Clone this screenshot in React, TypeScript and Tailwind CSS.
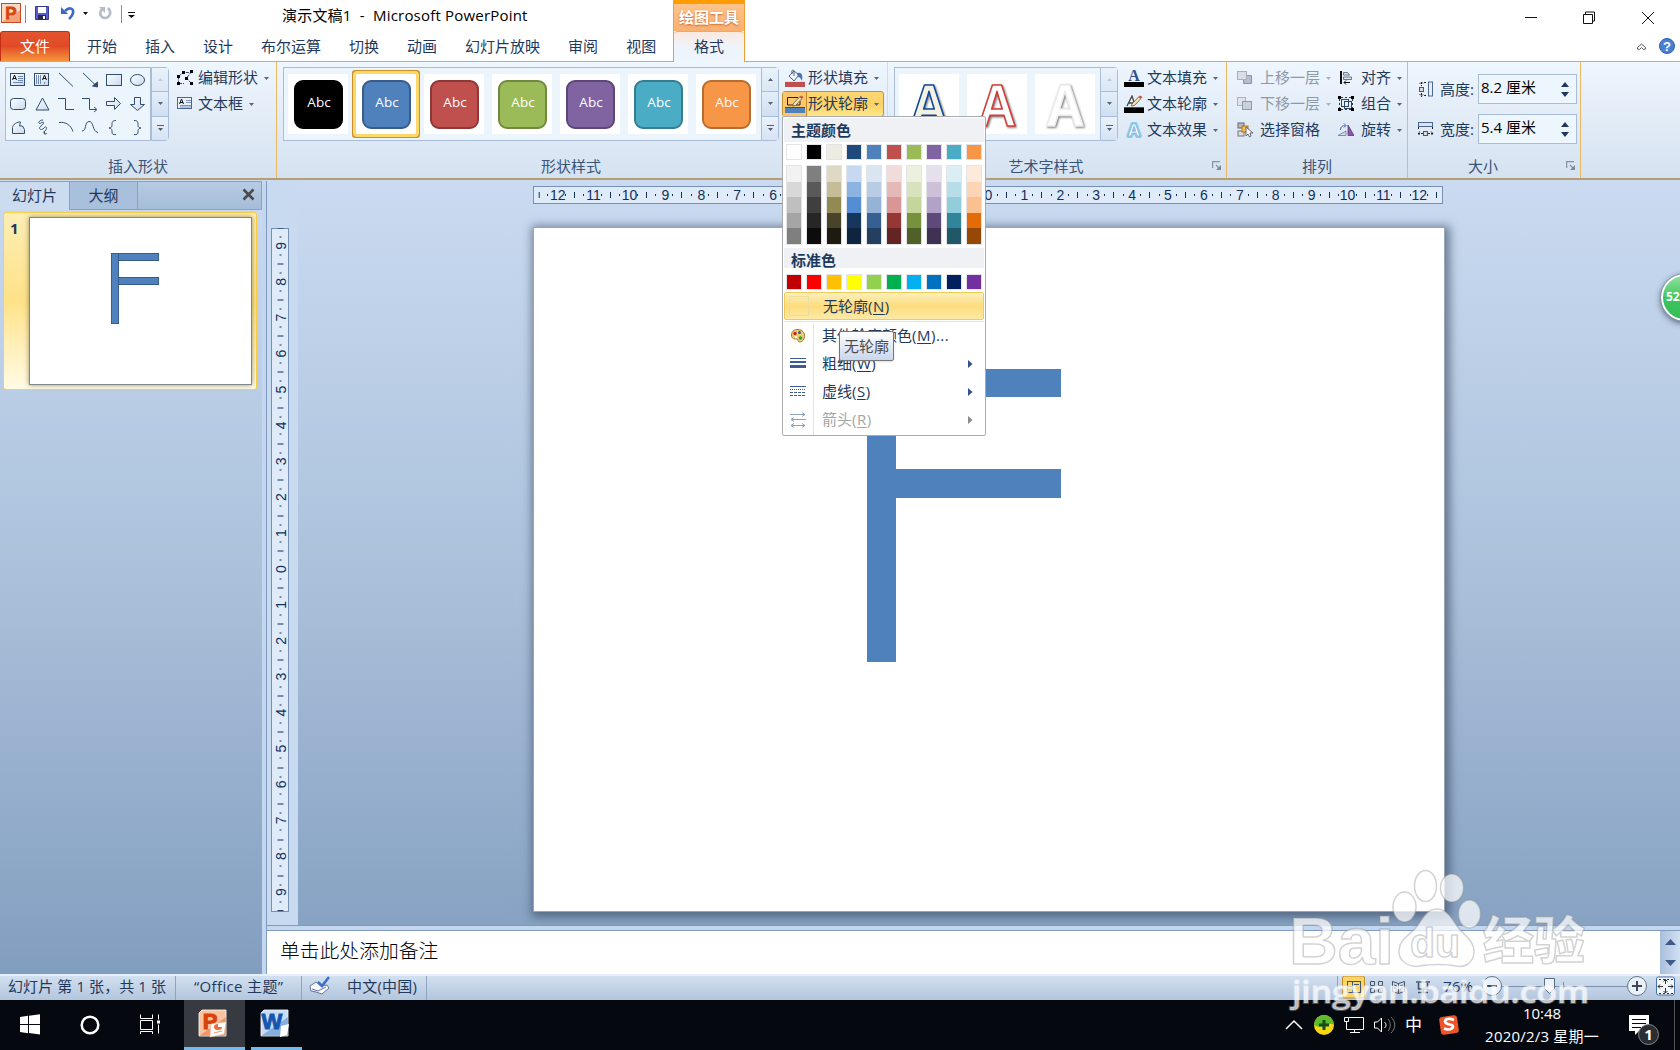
import React from "react";

const NAVY = "#1e395b";

const tabs = ["开始", "插入", "设计", "布尔运算", "切换", "动画", "幻灯片放映", "审阅", "视图"];

const shapeStyles = [
  { fill: "#000000", line: "#000000" },
  { fill: "#4f81bd", line: "#385d8a" },
  { fill: "#c0504d", line: "#8c3836" },
  { fill: "#9bbb59", line: "#71893f" },
  { fill: "#8064a2", line: "#5c4776" },
  { fill: "#4bacc6", line: "#357d91" },
  { fill: "#f79646", line: "#b66d31" },
];

const themeColors = [
  ["#ffffff", "#f2f2f2", "#d8d8d8", "#bfbfbf", "#a5a5a5", "#7f7f7f"],
  ["#000000", "#7f7f7f", "#595959", "#3f3f3f", "#262626", "#0c0c0c"],
  ["#eeece1", "#ddd9c3", "#c4bd97", "#938953", "#494429", "#1d1b10"],
  ["#1f497d", "#c6d9f0", "#8db3e2", "#548dd4", "#17365d", "#0f243e"],
  ["#4f81bd", "#dbe5f1", "#b8cce4", "#95b3d7", "#366092", "#244061"],
  ["#c0504d", "#f2dcdb", "#e5b9b7", "#d99694", "#953734", "#632423"],
  ["#9bbb59", "#ebf1dd", "#d7e3bc", "#c3d69b", "#76923c", "#4f6128"],
  ["#8064a2", "#e5e0ec", "#ccc1d9", "#b2a2c7", "#5f497a", "#3f3151"],
  ["#4bacc6", "#dbeef3", "#b7dde8", "#92cddc", "#31859b", "#205867"],
  ["#f79646", "#fdeada", "#fbd5b5", "#fac08f", "#e36c09", "#974806"],
];

const standardColors = ["#c00000", "#ff0000", "#ffc000", "#ffff00", "#92d050", "#00b050", "#00b0f0", "#0070c0", "#002060", "#7030a0"];

const Caret = ({ color = "#5c6672" }: { color?: string }) => (
  <svg width="5" height="3" viewBox="0 0 5 3" className="shrink-0">
    <path d="M0 0h5L2.5 3z" fill={color} />
  </svg>
);

const ShapesGallery = () => (
  <svg width="146" height="74" viewBox="5 67 146 74" fill="none" stroke="#2f4d75" strokeWidth="1">
    <defs>
      <linearGradient id="soft" x1="0" y1="0" x2="1" y2="1">
        <stop offset="0" stopColor="#fff" />
        <stop offset="1" stopColor="#c9d9ee" />
      </linearGradient>
    </defs>
    <rect x="10.5" y="73.5" width="14" height="12" fill="url(#soft)" />
    <path d="M18 76.500h5M18 78.500h5M18 80.500h5M13 82.500h10" stroke="#6f8bb5" />
    <path d="M12.500 80l2-5 2 5M13 78.500h3" stroke="#111" />
    <rect x="34.500" y="73.500" width="14" height="12" fill="url(#soft)" />
    <path d="M36.500 75v9M38.500 75v9M40.500 75v9M44.500 82v2" stroke="#6f8bb5" />
    <path d="M42.500 80l2-5 2 5M43 78.500h3" stroke="#111" />
    <path d="M59 73l14 13.500M83 73l13 12.500" />
    <path d="M97.500 87v-5l-5 4z" fill="#2f4d75" />
    <rect x="106.500" y="74.500" width="15" height="11" fill="url(#soft)" />
    <ellipse cx="137.500" cy="80" rx="7" ry="5.500" fill="url(#soft)" />
    <rect x="10.500" y="98.500" width="15" height="11" rx="3" fill="url(#soft)" />
    <path d="M42.500 98l6.500 12H36z" fill="url(#soft)" />
    <path d="M58 98.500h7.500v11H74M82 98.500h7.500v11H96M94 107l3 2.500-3 2.500" />
    <path d="M106.500 101.500h8v-4l6 6-6 6v-4h-8z" fill="url(#soft)" />
    <path d="M134.500 97.500h6v7h4l-7 6-7-6h4z" fill="url(#soft)" />
    <path d="M12.500 133.500v-6c0-3 5-6 8-5.500l-1 4h3l2 3.500v4z" fill="url(#soft)" />
    <path d="M43 120c-5 0-5 5-2 3s4 0 0 3 1 5 3 2 4 0 1 3 1 4 2 2M45 134l-1-3" />
    <path d="M59 122.500c7-1 12 3 14 9M82 131c5 0 2-9 7-9.500s3 10 9 11" />
    <path d="M116 120.500c-4 0-4 2-4 4s0 3-3 3.500c3 .5 3 2 3 4s1 3 4 2.500M134 120.500c4 0 4 2 4 4s0 3 3 3.500c-3 .5-3 2-3 4s-1 3-4 2.500" />
  </svg>
);

const GalleryScroll = ({ dimUp = false }: { dimUp?: boolean }) => (
  <div className="flex h-[74px] w-[18px] shrink-0 flex-col rounded-r-sm border border-[#a9bcd8] bg-[#dce8f5]">
    <div className="flex flex-1 items-center justify-center border-b border-[#a9bcd8] bg-linear-to-b from-[#eaf2fb] to-[#dbe7f4]">
      <svg width="5" height="3"><path d="M0 3h5L2.500 0z" fill={dimUp ? "#b9cde4" : "#56616f"} /></svg>
    </div>
    <div className="flex flex-1 items-center justify-center border-b border-[#a9bcd8] bg-linear-to-b from-[#e3eef9] to-[#cfdff2]">
      <Caret />
    </div>
    <div className="flex flex-1 items-center justify-center bg-linear-to-b from-[#eaf2fb] to-[#d5e3f3]">
      <svg width="7" height="6"><path d="M0 0h7v1H0zM1 3h5L3.500 6z" fill="#56616f" /></svg>
    </div>
  </div>
);

const Launcher = () => (
  <svg width="9" height="9" viewBox="0 0 9 9" fill="none" stroke="#8793a3" strokeWidth="1.300">
    <path d="M.6 7V.6H8M4 4l3 3" />
    <path d="M9 4v5H4z" fill="#7c8898" stroke="none" />
  </svg>
);

const icons: Record<string, React.ReactNode> = {
  editShape: (
    <>
      <path d="M1.500 13.500V6.500L6 2.500h8L9.500 8l5 5.500M2 13.500h5" fill="none" stroke="#2d4a78" strokeDasharray="3 1" />
      <path d="M5 1h3v3H5zM13 0h3v3h-3zM0 5h3v3H0zM0 12h3v3H0zM8 7h3v3H8zM13 12h3v3h-3z" fill="#000" />
    </>
  ),
  textBox: (
    <>
      <rect x=".5" y="1.500" width="14" height="11" fill="#eaf1fa" stroke="#48689a" />
      <path d="M9 4.500h5M9 6.500h5M3 9.500h11M3 11h11" stroke="#7c96be" />
      <path d="M2.500 8l2-5 2 5M3 6.500h3" fill="none" stroke="#111" />
    </>
  ),
  back: (
    <>
      <path d="M9.500 5.500h5v8h-8v-4h3z" fill="#b3bfd0" stroke="#8794a8" />
      <rect x=".5" y="1.500" width="9" height="8" fill="#dadee4" stroke="#a7b0bc" />
    </>
  ),
  front: (
    <>
      <rect x=".5" y="1.500" width="8" height="8" fill="#e0e4ea" stroke="#abb4bf" />
      <rect x="5.500" y="5.500" width="9" height="8" fill="#c9d1dc" stroke="#8e9bae" />
    </>
  ),
  pane: (
    <>
      <rect x="1" y="1" width="6" height="5" fill="#bbb" stroke="#666" />
      <rect x="1" y="9" width="6" height="5" fill="#ddd" stroke="#777" />
      <rect x="5" y="4" width="6" height="6" fill="#f5bf54" stroke="#a97a28" />
      <path d="M9 5v9l2-2 1.500 3 1.500-1-1-3h3z" fill="#fff" stroke="#445" strokeWidth=".8" />
    </>
  ),
  align: (
    <>
      <path d="M2 1h2v13H2z" fill="#111" />
      <path d="M5.500 2.500h4l2 2.500h-6zM5.500 7h8v2.500h-8z" fill="#dce4ee" stroke="#5b6b84" strokeWidth=".9" />
      <path d="M6 12.500h6M8 10.500l-2 2 2 2" fill="none" stroke="#111" />
    </>
  ),
  group: (
    <>
      <rect x="3.500" y="3.500" width="7" height="7" fill="none" stroke="#2b456b" />
      <rect x="6.500" y="5.500" width="7" height="7" fill="none" stroke="#2b456b" />
      <path d="M0 0h3v3H0zM13 0h3v3h-3zM0 12h3v3H0zM13 12h3v3h-3z" fill="#000" />
      <path d="M1.500 3v9M14.500 3v9M3 1.500h10M3 13.500h10" stroke="#333" strokeDasharray="2 2" />
    </>
  ),
  rotate: (
    <>
      <path d="M0 13.500L8 9v4.500z" fill="#d2dbe5" stroke="#6c7c90" strokeWidth=".8" />
      <path d="M10 3l6 10.500h-6z" fill="#8758a8" stroke="#5b3a7c" strokeWidth=".8" />
      <path d="M2.500 8c0-3 2-5 5-4M6 1.500l2 2-2 2" fill="none" stroke="#3964a6" />
    </>
  ),
  heightIcon: (
    <>
      <rect x="10.500" y="1" width="4" height="14" fill="#e6eef8" stroke="#4d6791" />
      <rect x="1.500" y="6.500" width="4" height="4" fill="#ddd" stroke="#555" />
      <path d="M3.500 1v4M3.500 12v4M1.500 3l2-2 2 2M1.500 13l2 2 2-2M6 1.500h3M6 14.500h3" fill="none" stroke="#222" strokeDasharray="2 1" />
    </>
  ),
  widthIcon: (
    <>
      <rect x=".5" y="1.500" width="14" height="4" fill="#dbe5f2" stroke="#4d6791" />
      <rect x="5.500" y="10.500" width="4" height="4" fill="#ddd" stroke="#555" />
      <path d="M0 12.500h5M10 12.500h5M2 10.500l-2 2 2 2M13 10.500l2 2-2 2M.5 6v3M14.500 6v3" fill="none" stroke="#222" strokeDasharray="2 1" />
    </>
  ),
};

const Icon = ({ name }: { name: string }) => (
  <svg width="16" height="16" viewBox="0 0 16 16" className="shrink-0">{icons[name]}</svg>
);

const fillIcon = (
  <svg width="20" height="18" viewBox="0 0 20 18">
    <path d="M0 13h20v5H0z" fill="#c0504d" />
    <path d="M0 12h20v1H0z" fill="#ffff00" />
    <path d="M4 7l5-5 5 4-5 6z" fill="#f1f4f8" stroke="#51627b" />
    <path d="M7 5c-1-5 2-5 2-2v4" fill="none" stroke="#51627b" />
    <path d="M12 4c5-1 6 2 5 8-1-2-2-4-4-4z" fill="#4974b4" />
  </svg>
);

const pencilLine = (bar: string) => (
  <svg width="20" height="18" viewBox="0 0 20 18">
    <path d="M0 13h20v5H0z" fill={bar} />
    <path d="M0 12h20v1H0z" fill="#3c3cc0" />
    {bar === "#000" ? (
      <path d="M3 11L8 1l2 6M5 8h4" fill="none" stroke="#444" strokeWidth="1.300" />
    ) : (
      <path d="M13 2.500H2.500V10H15V6" fill="none" stroke="#222" />
    )}
    <path d="M8 9l6.500-7 2.500 1.500-6.500 7-3 .500z" fill="#f3e2b4" stroke="#6b5638" strokeWidth=".8" />
    <path d="M14.500 2L16 .5 18.500 2 17 3.500z" fill="#c8524d" />
  </svg>
);

const textFill = (
  <svg width="20" height="18" viewBox="0 0 20 18">
    <path d="M0 13h20v5H0z" fill="#000" />
    <text x="10" y="11.500" textAnchor="middle" fontSize="16" fontWeight="bold" fontFamily="Liberation Serif, serif" fill="#2f4f8f">A</text>
  </svg>
);

const textEffect = (
  <svg width="20" height="18" viewBox="0 0 20 18">
    <text x="10" y="15" textAnchor="middle" fontSize="17" fontWeight="bold" fontFamily="Liberation Sans, sans-serif" fill="#fff" stroke="#8ccbea" strokeWidth="4" strokeLinejoin="round" paintOrder="stroke">A</text>
    <text x="10" y="15" textAnchor="middle" fontSize="17" fontWeight="bold" fontFamily="Liberation Sans, sans-serif" fill="#fff" stroke="#6aa9d2" strokeWidth=".7">A</text>
  </svg>
);

type GroupProps = { label: string; width: string; launcher?: boolean; border?: string; labelPad?: string; children: React.ReactNode };

const Group = ({ label, width, launcher, border = "border-[#eeb95e]", labelPad = "", children }: GroupProps) => (
  <div className={`relative flex h-full shrink-0 flex-col border-r ${border} ${width}`}>
    <div className="flex h-[90px] pt-[5px]">{children}</div>
    <div className={`flex h-[26px] items-center justify-center pt-px text-[#3b5476] ${labelPad}`}>{label}</div>
    {launcher && <div className="absolute right-[5px] bottom-[8px] leading-none"><Launcher /></div>}
  </div>
);

type CmdProps = { icon: React.ReactNode; label: string; caret?: boolean; dim?: boolean };

const Cmd = ({ icon, label, caret = true, dim }: CmdProps) => (
  <div className={`flex h-[26px] items-center ${dim ? "text-[#8f98a5]" : ""}`}>
    <span className="flex w-[23px] shrink-0">{icon}</span>
    <span className="pb-[2px]">{label}</span>
    {caret && <span className="ml-[6px] flex"><Caret color={dim ? "#a9b2be" : undefined} /></span>}
  </div>
);

const TitleBar = () => (
  <header className="relative flex h-[62px] flex-col bg-white">
    <div className="flex h-[31px] items-start">
      <div className="flex h-[27px] w-[282px] shrink-0 items-center">
        <svg width="138" height="27" viewBox="0 0 138 27">
          <rect x="1.500" y="3.500" width="19" height="19" fill="#fbd9c5" stroke="#cc4a22" />
          <path d="M2 22L20 10v12z" fill="#f2a17b" />
          <text x="11" y="19" textAnchor="middle" fontSize="17" fontWeight="bold" fontFamily="Liberation Sans, sans-serif" fill="#d4480f" stroke="#d4480f" strokeWidth=".8">P</text>
          <path d="M25.500 5v18M121.500 5v18" stroke="#8c8c8c" />
          <path d="M35.500 6.500h13v13h-13z" fill="#5a5fc8" stroke="#353a94" />
          <path d="M38 7h8v6h-8z" fill="#fff" />
          <path d="M38 15h8v5h-8z" fill="#262a55" />
          <path d="M43 16h2v3h-2z" fill="#fff" />
          <path d="M65 11c5-5 9-2 8 2-.5 3-3 5-4 6" fill="none" stroke="#3c69c6" strokeWidth="2.600" />
          <path d="M61 7v7h7z" fill="#3c69c6" />
          <path d="M83 12h5l-2.500 3zM128 15h7l-3.500 3zM128 12h7v1h-7z" fill="#111" />
          <path d="M102 9c-5 7 3 12 7 7 2-3 1-6-1-8" fill="none" stroke="#b4bcc8" strokeWidth="2.600" />
          <path d="M99 7h6v6z" fill="#b4bcc8" />
        </svg>
      </div>
      <div className="pt-[3px] whitespace-pre text-[15px] leading-[24px] tracking-[0.2px] text-black">演示文稿1  -  Microsoft PowerPoint</div>
      <svg width="150" height="27" viewBox="1520 0 150 27" className="ml-auto mr-[10px]" fill="none" stroke="#111">
        <path d="M1525 17.500h12M1583.500 14.500h9v9h-9zM1585.500 14v-2h9v9h-2M1642 12l12 12M1654 12l-12 12" />
      </svg>
    </div>
    <div className="flex h-[31px] items-center border-b border-[#f0a53c]">
      <div className="flex h-[30px] w-[70px] items-center justify-center rounded-t-[3px] border border-b-0 border-[#c32f12] bg-linear-to-b from-[#e2552e] via-[#e24a26] to-[#f5943c] pb-px text-white">文件</div>
      <div className="flex gap-[28px] pl-[17px]">
        {tabs.map((t) => <span key={t}>{t}</span>)}
      </div>
      <svg width="44" height="20" viewBox="1634 35 44 20" className="ml-auto mr-[2px]">
        <path d="M1637.500 48v-1.500l4-3.500 4 3.500V48l-2 .5-2-2-2 2z" fill="#fff" stroke="#555" />
        <circle cx="1667" cy="45" r="7.500" fill="#4a7fd4" stroke="#2f5eb0" />
        <text x="1667" y="49.500" textAnchor="middle" fontSize="13" fontWeight="bold" fill="#fff" fontFamily="Liberation Sans, sans-serif">?</text>
      </svg>
    </div>
    {/* contextual tab sits over both rows */}
    <div className="absolute top-0 left-[673px] flex h-[62px] w-[72px] flex-col border-x border-[#f0a030]">
      <div className="flex h-[31px] items-center justify-center border-t-4 border-[#ff9c00] bg-linear-to-b from-[#fdc48c] to-[#f9b071] pb-px font-bold text-white [text-shadow:0_1px_2px_#c8662c]">绘图工具</div>
      <div className="flex h-[31px] items-center justify-center rounded-t-sm border-t border-[#f0a860] bg-linear-to-b from-[#fbe9e0] via-[#eef4fb] to-[#edf5fd] pb-[3px]">格式</div>
    </div>
  </header>
);

const WordArtCell = ({ fill, stroke }: { fill: string; stroke: string }) => (
  <div className="flex h-[60px] w-[60px] items-center justify-center bg-white">
    <svg width="60" height="60" className="overflow-visible">
      <text x="30" y="52" textAnchor="middle" fontSize="60" fontWeight="bold" fontFamily="Liberation Sans, sans-serif" textLength="39" lengthAdjust="spacingAndGlyphs" fill={fill} stroke={stroke} strokeWidth="1.700" strokeLinejoin="round" className="drop-shadow-[1px_1px_1px_rgba(0,0,0,0.55)]">A</text>
    </svg>
  </div>
);

const SizeField = ({ icon, label, value }: { icon: string; label: string; value: string }) => (
  <div className="flex h-[30px] items-center">
    <span className="w-[22px]"><Icon name={icon} /></span>
    <span className="w-[38px] whitespace-nowrap">{label}</span>
    <div className="flex h-[30px] w-[99px] items-center justify-between border border-[#a9bcd8] bg-[#eef6fd] pr-[7px] pl-[2px] text-black">
      <span className="pb-[4px]">{value}</span>
      <svg width="8" height="15"><path d="M0 5h8L4 0zM0 10h8l-4 5z" fill="#1f3658" /></svg>
    </div>
  </div>
);

const Ribbon = () => (
  <section className="flex h-[118px] border-b-2 border-[#b59e74] bg-linear-to-b from-[#eef6fe] via-[#e2ecf7] to-[#d5e2f1]">
    <Group label="插入形状" width="w-[277px]">
      <div className="ml-[5px] flex h-[74px]">
        <div className="box-border h-[74px] w-[146px] bg-[#edf5fc] outline -outline-offset-1 outline-[#a9bcd8]"><ShapesGallery /></div>
        <GalleryScroll dimUp />
      </div>
      <div className="-mt-[2px] ml-[8px] flex flex-col">
        <div className="flex h-[26px] items-center"><span className="w-[21px]"><Icon name="editShape" /></span><span className="pb-[2px]">编辑形状</span><span className="ml-[6px]"><Caret /></span></div>
        <div className="flex h-[26px] items-center"><span className="w-[21px]"><Icon name="textBox" /></span><span className="pb-[2px]">文本框</span><span className="ml-[6px]"><Caret /></span></div>
      </div>
    </Group>
    <Group label="形状样式" width="w-[611px]" border="border-[#cfdcea]" labelPad="pr-[22px]">
      <div className="ml-[6px] flex h-[74px] w-[478px] items-center gap-[8px] border border-r-0 border-[#a9bcd8] bg-[#edf5fc] pl-[4px]">
        {shapeStyles.map((s, i) => (
          <div key={s.fill} className={`flex h-[60px] w-[60px] shrink-0 items-center justify-center bg-white ${i === 1 ? "rounded-[1px] outline-3 outline-[#fbd968] [box-shadow:0_0_0_4px_#c98f2c]" : ""}`}>
            <div className="flex h-[49px] w-[49px] items-center justify-center rounded-[9px] border-2 pb-[4px] pl-[2px] text-[13.500px] text-white" style={{ backgroundColor: s.fill, borderColor: s.line }}>Abc</div>
          </div>
        ))}
      </div>
      <GalleryScroll />
      <div className="-mt-[2px] ml-[3px] flex flex-col">
        <div className="ml-[3px]"><Cmd icon={fillIcon} label="形状填充" /></div>
        <div className="flex h-[26px] w-[102px] items-center rounded-[3px] border border-[#c2922e] bg-linear-to-b from-[#fbd874] via-[#fdd067] to-[#ffe888]">
          <div className="flex h-full w-[24px] items-center border-r border-[#c9862a] bg-[#fcc76a] pl-[2px]">{pencilLine("#4f81bd")}</div>
          <span className="ml-px pb-[2px]">形状轮廓</span>
          <span className="ml-[6px]"><Caret /></span>
        </div>
      </div>
    </Group>
    <Group label="艺术字样式" width="w-[339px]" launcher labelPad="pr-[22px]">
      <div className="ml-[6px] flex h-[74px] w-[206px] items-center gap-[8px] border border-r-0 border-[#a9bcd8] bg-[#edf5fc] pl-[4px]">
        <WordArtCell fill="#f4f0e2" stroke="#0b4a9c" />
        <WordArtCell fill="#ffffff" stroke="#d63c38" />
        <WordArtCell fill="#ffffff" stroke="#ececec" />
      </div>
      <GalleryScroll dimUp />
      <div className="-mt-[2px] ml-[6px] flex flex-col">
        <Cmd icon={textFill} label="文本填充" />
        <Cmd icon={pencilLine("#000")} label="文本轮廓" />
        <Cmd icon={textEffect} label="文本效果" />
      </div>
    </Group>
    <Group label="排列" width="w-[181px]">
      <div className="-mt-[2px] ml-[10px] flex w-[101px] flex-col">
        <Cmd icon={<Icon name="back" />} label="上移一层" dim />
        <Cmd icon={<Icon name="front" />} label="下移一层" dim />
        <Cmd icon={<Icon name="pane" />} label="选择窗格" caret={false} />
      </div>
      <div className="-mt-[2px] flex flex-col">
        <Cmd icon={<Icon name="align" />} label="对齐" />
        <Cmd icon={<Icon name="group" />} label="组合" />
        <Cmd icon={<Icon name="rotate" />} label="旋转" />
      </div>
    </Group>
    <Group label="大小" width="w-[173px]" launcher labelPad="pr-[22px]">
      <div className="mt-[7px] ml-[10px] flex flex-col gap-[10px]">
        <SizeField icon="heightIcon" label="高度:" value="8.2 厘米" />
        <SizeField icon="widthIcon" label="宽度:" value="5.4 厘米" />
      </div>
    </Group>
  </section>
);

const SidePanel = () => (
  <aside className="flex w-[262px] shrink-0 flex-col border-t border-[#8aa0c4]">
    <div className="flex h-[28px]">
      <div className="flex w-[69px] items-center justify-center bg-[#cbdcf0] pb-[2px]">幻灯片</div>
      <div className="flex w-[69px] items-center justify-center border-x border-b border-[#8aa0c4] bg-[#a9c0dc] pb-px">大纲</div>
      <div className="flex flex-1 items-center justify-end border-r border-b border-[#8aa0c4] bg-linear-to-b from-[#b6cbe3] to-[#a6bdd9] pr-[6px] pb-[2px]">
        <svg width="13" height="13" viewBox="0 0 13 13"><path d="M1.500 1.500l10 10M11.500 1.500l-10 10" stroke="#4a4a4a" strokeWidth="2.600" /></svg>
      </div>
    </div>
    <div className="mt-[2px] ml-[3px] flex h-[178px] w-[254px] rounded-[3px] border border-[#fbd048] bg-linear-to-b from-[#fdeeb4] via-[#ffe288] to-[#fffbe4]">
      <span className="w-[25px] pt-[5px] pl-[6px] font-bold">1</span>
      <div className="mt-[4px] h-[168px] w-[223px] border border-[#7f8690] bg-white shadow-[0_0_5px_rgba(90,80,40,0.6)]">
        <svg width="221" height="166" viewBox="30 218 221 166" fill="#4f81bd" stroke="#385d8a">
          <rect x="118.500" y="253.500" width="40" height="7" />
          <rect x="118.500" y="277.500" width="40" height="7" />
          <rect x="111.500" y="253.500" width="7" height="70" />
        </svg>
      </div>
    </div>
  </aside>
);

const PITCH = 35.9;

const Marks = ({ count }: { count: number }) => (
  <>
    {Array.from({ length: count * 2 + 1 }, (_, i) => i - count).map((n) => (
      <g key={n}>
        <text x={n * PITCH + 0.5} y="5" textAnchor="middle" fontSize="14" fontFamily="Liberation Sans, sans-serif">{Math.abs(n)}</text>
        <path d={`M${Math.round(n * PITCH - 9)}.5 -1v2M${Math.round(n * PITCH + 8.5)}.5 -1v2M${Math.round(n * PITCH + 17.5)}.5 -3v6`} stroke="#12305c" />
      </g>
    ))}
    <path d={`M${-count * PITCH - 18} -3v6`} stroke="#12305c" />
  </>
);

const Editor = () => (
  <main className="flex min-w-0 flex-1 flex-col">
    <div className="flex h-[745px] border-b border-[#7f9bc2]">
      <div className="w-[31px] shrink-0 bg-[#c8daf0] pt-[47px] pl-[4px]">
        <svg width="18" height="684" fill="#12305c">
          <rect x=".5" y=".5" width="17" height="683" fill="#dfebf8" stroke="#7791b5" />
          <g transform="translate(9.500 341.500) rotate(-90)"><Marks count={9} /></g>
        </svg>
      </div>
      <div className="flex flex-col pt-[5px] pl-[235px]">
        <svg width="910" height="18" fill="#12305c">
          <rect x=".5" y=".5" width="909" height="17" fill="#dfebf8" stroke="#7791b5" />
          <g transform="translate(455 9)"><Marks count={12} /></g>
        </svg>
        <div className="mt-[23px] h-[685px] w-[912px] border border-[#9aa5b4] bg-white shadow-[2px_2px_9px_3px_rgba(50,65,90,0.6)]">
          <svg width="910" height="683" viewBox="534 228 910 683" fill="#4f81bd">
            <path d="M867 369h194v28H896v72h165v29H896v164h-29z" />
          </svg>
        </div>
      </div>
    </div>
    <div className="h-[5px] border-b border-[#7f9bc2] bg-[#c5d7ee]" />
    <div className="flex h-[43px] bg-white">
      <p className="flex-1 pt-[7px] pl-[13px] text-[19.800px] leading-[26px] font-light text-black [font-family:'Liberation_Serif','Noto_Sans_CJK_SC',serif]">单击此处添加备注</p>
      <div className="flex w-[20px] flex-col items-center justify-between bg-linear-to-r from-[#a9bfdc] to-[#d2e0f2] py-[8px]">
        <svg width="11" height="6"><path d="M0 6h11L5.500 0z" fill="#41598a" /></svg>
        <svg width="11" height="6"><path d="M0 0h11L5.500 6z" fill="#41598a" /></svg>
      </div>
    </div>
  </main>
);

const StatusBar = () => (
  <footer className="flex h-[26px] items-center border-t-2 border-[#e6effa] bg-linear-to-b from-[#d2e0f0] to-[#b3c6dd]">
    <div className="flex h-full w-[176px] items-center border-r border-[#8ea4c2] pb-[4px] pl-[8px] whitespace-nowrap tracking-[0.1px]">幻灯片 第 1 张，共 1 张</div>
    <div className="flex h-full w-[126px] items-center border-r border-[#8ea4c2] pb-[4px] pl-[18px] whitespace-nowrap tracking-[0.35px]">“Office 主题”</div>
    <div className="flex h-full w-[125px] items-center border-r border-[#8ea4c2] pb-[4px] pl-[7px] tracking-[0.2px]">
      <svg width="22" height="20" viewBox="0 0 22 20" className="mr-[16px]">
        <path d="M1 10l6-4 5 4 6-1 2 3-7 6-6-2-5-1z" fill="#f7f9fc" stroke="#62769e" />
        <path d="M3 13l6 2 8-4" fill="none" stroke="#62769e" />
        <path d="M9 6l4 4 7-9" fill="none" stroke="#3e6ed0" strokeWidth="2.500" />
      </svg>
      中文(中国)
    </div>
    <svg width="342" height="24" viewBox="1337 976 342 24" className="ml-auto mr-px">
      <path d="M1337.500 976v24" stroke="#8ea4c2" />
      <rect x="1342.500" y="976" width="22" height="22" rx="2" fill="#fbd565" stroke="#c48a26" />
      <g fill="none" stroke="#46546b">
        <rect x="1347.500" y="981.500" width="13" height="11" />
        <path d="M1352.500 982v10M1348 986.500h4M1354 984.500h5" />
        <path d="M1370.500 981.500h4v4h-4zM1378.500 981.500h4v4h-4zM1370.500 988.500h4v4h-4zM1378.500 988.500h4v4h-4z" />
        <path d="M1392.500 981.500l6 2 6-2v10l-6 2-6-2zM1398.500 983v10M1394 985l3 1M1394 988l3 1M1400 986l3-1M1400 989l3-1" />
        <path d="M1416 982h14M1418.500 983v6h9v-6M1423 989v3M1418 992.500h10" strokeWidth="1.600" />
      </g>
      <text x="1443" y="992" fontSize="15" textLength="30" lengthAdjust="spacingAndGlyphs" fill={NAVY} fontFamily="Open Sans, sans-serif">76%</text>
      <path d="M1502 986.500h125M1563.500 982v8" stroke="#7d8fab" />
      <circle cx="1492" cy="986" r="9.500" fill="#e9f0f8" stroke="#65758e" />
      <circle cx="1637" cy="986" r="9.500" fill="#e9f0f8" stroke="#65758e" />
      <path d="M1487 986h10M1632 986h10M1637 981v10" stroke="#3c4654" strokeWidth="2" />
      <path d="M1544.500 978.500h10v10l-5 5-5-5z" fill="#eff3f9" stroke="#5c6c86" />
      <rect x="1656.500" y="977" width="18" height="18" rx="2" fill="#f4f8fc" stroke="#4671ae" />
      <path d="M1665.500 979v5M1663.500 981.500l2-2 2 2M1665.500 988v5M1663.500 991l2 2 2-2M1658 986.500h5M1660 984.500l-2 2 2 2M1668 986.500h5M1671 984.500l2 2-2 2" fill="none" stroke="#333" />
      <path d="M1659 979.500h14M1659 993.500h14" stroke="#333" strokeDasharray="2 2" />
    </svg>
  </footer>
);

const OfficeTile = ({ letter, light, dark }: { letter: string; light: string; dark: string }) => (
  <svg width="29" height="29" viewBox="0 0 29 29">
    <path d="M4 1h24v26H1V4z" fill={light} stroke="#fff" strokeWidth=".8" />
    <path d="M1 27L28 8v19z" fill={dark} opacity=".35" />
    <text x="12" y="20" textAnchor="middle" fontSize="22" fontWeight="bold" fontFamily="Liberation Sans, sans-serif" fill={dark} stroke={dark}>{letter}</text>
    {letter === "P" ? (
      <>
        <path d="M13 15l15-2-2 12-14 3z" fill="#fff" stroke={light} strokeWidth=".6" />
        <path d="M24 18a4 3 0 1 1-4-3v3z" fill="#ef6c3a" />
        <path d="M16 24l8-2" stroke="#ef9c70" />
      </>
    ) : (
      <path d="M21 17l8-2-2 11-7 2z" fill="#fff" />
    )}
  </svg>
);

const Taskbar = () => (
  <nav className="flex h-[50px] items-center bg-[#05080e] text-white">
    <svg width="184" height="50" viewBox="0 1000.500 184 50" className="shrink-0">
      <path d="M20 1017.500l8-1.200v8.200h-8zM29 1016.200l11-1.500v9.800H29zM20 1025.500h8v8.200l-8-1.200zM29 1025.500h11v9.500l-11-1.500z" fill="#fff" />
      <circle cx="90" cy="1025.500" r="8.300" fill="none" stroke="#fff" strokeWidth="2.500" />
      <path d="M140.500 1015v4h12v-4M140.500 1021h12v9h-12zM140.500 1034.500v-2.500h12v2.500M158.500 1015v5M158.500 1025v9" fill="none" stroke="#fff" />
      <path d="M157 1021h3v3h-3z" fill="#fff" />
    </svg>
    <div className="flex h-full w-[61px] items-center justify-center border-b-[3px] border-[#76b9ed] bg-[#373b41] pr-[4px]"><OfficeTile letter="P" light="#f9c3a0" dark="#d8430c" /></div>
    <div className="ml-[6px] flex h-full w-[51px] items-center justify-center border-b-[3px] border-[#76b9ed] pr-[4px]"><OfficeTile letter="W" light="#c6ddf5" dark="#1556b0" /></div>
    <svg width="190" height="50" viewBox="1280 1000 190 50" className="ml-auto shrink-0" fill="none" stroke="#fff">
      <path d="M1286 1029l8-8 8 8" strokeWidth="1.500" />
      <circle cx="1324" cy="1025" r="10" fill="#f7d814" stroke="none" />
      <path d="M1314 1025a10 10 0 0 1 20 0c-6-5-10 6-20 0z" fill="#5dbb2c" stroke="none" />
      <path d="M1324 1020v10M1319 1025h10" stroke="#174c1c" strokeWidth="3" />
      <path d="M1349 1017.500h14.500v12h-17V1025M1344.500 1017.500h4v4h-4zM1346.500 1022v3M1354.500 1030v2.500M1350 1032.500h10" />
      <path d="M1374.500 1022h3l4-4v14l-4-4h-3zM1384.500 1022c2 2 2 4 0 6" />
      <path d="M1388 1019c3 3 3 9 0 12M1391 1017c5 5 5 11 0 16" stroke="#777" />
      <text x="1413.500" y="1031" textAnchor="middle" fontSize="17" fill="#fff" stroke="none" fontFamily="Noto Sans CJK SC, sans-serif">中</text>
      <rect x="1440" y="1016" width="18" height="18" rx="3" fill="#f0542a" stroke="none" transform="rotate(-8 1449 1025)" />
      <path d="M1454 1020c-3-1.500-9-2-9 1.500s8 2.500 8 5-5 4-9 2" strokeWidth="2.600" />
    </svg>
    <div className="flex w-[144px] shrink-0 flex-col items-center text-center text-[15px] leading-[23px]">
      <span>10:48</span>
      <span className="whitespace-nowrap tracking-[0.2px]">2020/2/3 星期一</span>
    </div>
    <svg width="66" height="50" viewBox="1614 1000 66 50" className="shrink-0">
      <path d="M1629 1015h20v16h-10l-4 4v-4h-6z" fill="#fff" />
      <path d="M1632 1019.500h14M1632 1023.500h14M1632 1027.500h9" stroke="#05080e" />
      <circle cx="1648.500" cy="1034.500" r="10" fill="#2a2d31" stroke="#888" />
      <text x="1648.500" y="1040" textAnchor="middle" fontSize="15" fontWeight="bold" fill="#fff" fontFamily="Open Sans, sans-serif">1</text>
      <path d="M1674.500 1000v50" stroke="#555" />
    </svg>
  </nav>
);

const menuIcons = {
  more: (
    <>
      <path d="M8 1.500c4 0 7 3 6.500 7-.5 4-3 5.500-5 5.500s-1-3-3-3-5 0-5-4 3-5.500 6.500-5.500z" fill="#f0cb6c" stroke="#a97820" />
      <circle cx="5" cy="5.500" r="1.700" fill="#c22" />
      <circle cx="9.500" cy="4.500" r="1.500" fill="#26a" />
      <circle cx="10.500" cy="10" r="1.800" fill="#2a4" />
      <circle cx="6" cy="9" r="1.200" fill="#fff" />
    </>
  ),
  weight: <path d="M0 2h16v1H0zM0 5h16v2H0zM0 9h16v3H0z" fill="#3e5c94" />,
  dash: (
    <>
      <path d="M0 2.500h16" stroke="#3e5c94" />
      <path d="M0 5.500h16" stroke="#3e5c94" strokeDasharray="1 1" />
      <path d="M0 8.500h16M0 11.500h16" stroke="#3e5c94" strokeDasharray="3 1" />
    </>
  ),
  arrow: <path d="M0 2.500h15M12 .5l3 2-3 2M1 7.500h15M4 5.500l-3 2 3 2M1 13.500h14M4 11.500l-3 2 3 2M12 11.500l3 2-3 2" fill="none" stroke="#93a2ba" />,
};

type MenuItemProps = { icon: React.ReactNode; text: string; hotkey: string; after?: string; sub?: boolean; dim?: boolean };

const MenuItem = ({ icon, text, hotkey, after = "", sub, dim }: MenuItemProps) => (
  <div className={`flex h-[28px] items-center ${dim ? "text-[#a5a5a5]" : ""}`}>
    <span className="flex h-full w-[30px] items-center border-r border-[#e2e4e7] pb-[3px] pl-[6px]">
      <svg width="16" height="16">{icon}</svg>
    </span>
    <span className="pb-[4px] pl-[8px]">{text}<span className="tracking-[0.5px]">(<u className="underline-offset-2">{hotkey}</u>){after}</span></span>
    {sub && <svg width="5" height="8" className="mr-[11px] mb-[3px] ml-auto"><path d="M0 0v8l4.500-4z" fill={dim ? "#8a8a8a" : "#34528c"} /></svg>}
  </div>
);

const OutlineMenu = () => (
  <div className="absolute top-[116px] left-[782px] flex h-[320px] w-[204px] flex-col rounded-[2px] border border-[#a7abb0] bg-white px-px pt-px">
    <div className="flex h-[24px] items-center bg-[#f0f1f5] pl-[7px] font-bold">主题颜色</div>
    <div className="flex gap-[4px] pt-[2px] pl-[2px]">
      {themeColors.map((col) => (
        <div key={col[0]} className="flex w-[16px] flex-col">
          <div className="h-[16px] border border-[#e2e4e7]" style={{ backgroundColor: col[0] }} />
          <div className="mt-[5px] flex h-[80px] flex-col border border-[#e2e4e7]">
            {col.slice(1).map((c) => <div key={c} className="flex-1" style={{ backgroundColor: c }} />)}
          </div>
        </div>
      ))}
    </div>
    <div className="mt-[3px] flex h-[20px] items-center bg-[#f0f1f5] pt-[3px] pl-[7px] font-bold">标准色</div>
    <div className="flex gap-[4px] pt-[6px] pl-[2px]">
      {standardColors.map((c) => <div key={c} className="h-[16px] w-[16px] border border-[#e2e4e7]" style={{ backgroundColor: c }} />)}
    </div>
    <div className="mt-[2px] flex h-[28px] shrink-0 items-center rounded-[2px] border border-[#f0cb58] bg-linear-to-b from-[#fdf0bc] via-[#fcdc7c] to-[#fdeaa6] pl-[4px]">
      <span className="h-[20px] w-[20px] border border-[#f0dca0]" />
      <span className="pl-[14px]">无轮廓<span className="tracking-[0.5px]">(<u className="underline-offset-2">N</u>)</span></span>
    </div>
    <div className="mt-px flex flex-col border-t border-[#e2e4e7] pt-px">
      <MenuItem icon={menuIcons.more} text="其他轮廓颜色" hotkey="M" after="..." />
      <MenuItem icon={menuIcons.weight} text="粗细" hotkey="W" sub />
      <MenuItem icon={menuIcons.dash} text="虚线" hotkey="S" sub />
      <MenuItem icon={menuIcons.arrow} text="箭头" hotkey="R" sub dim />
    </div>
    <div className="absolute top-[214px] left-[56px] flex h-[30px] w-[55px] items-center justify-center rounded-[2px] border border-[#767676] bg-linear-to-b from-white to-[#c9d6ec] text-[#4c4c4c] shadow-sm">无轮廓</div>
  </div>
);

const Watermark = () => (
  <svg width="320" height="160" viewBox="1280 860 320 160" className="pointer-events-none absolute top-[860px] left-[1280px]" fill="#fff" fillOpacity=".72" stroke="#8c8c8c" strokeOpacity=".38" strokeWidth="1.500" strokeLinejoin="round">
    <text x="1289" y="964" fontSize="67" fontWeight="900" textLength="105" lengthAdjust="spacingAndGlyphs" fontFamily="Liberation Sans, sans-serif">Bai</text>
    <ellipse cx="1404.500" cy="907" rx="11.500" ry="15" />
    <ellipse cx="1425.500" cy="886" rx="11" ry="15.500" />
    <ellipse cx="1452" cy="888" rx="11.500" ry="14" />
    <ellipse cx="1469.500" cy="914" rx="11" ry="14" />
    <path d="M1437 909c9 0 14 8 20 17s17 14 17 25-8 17-18 15-26-2-36 0-22-4-21-16 12-15 19-25 10-16 19-16z" />
    <text x="1410" y="957" fontSize="40" fontWeight="bold" textLength="50" lengthAdjust="spacingAndGlyphs" fontFamily="Liberation Sans, sans-serif">du</text>
    <text x="1483" y="959" fontSize="51" fontWeight="900" fontFamily="Noto Sans CJK SC, sans-serif">经验</text>
    <text x="1292" y="1003" fontSize="31" fontWeight="600" textLength="297" lengthAdjust="spacingAndGlyphs" fontFamily="Open Sans, sans-serif" strokeWidth="2" stroke="#fff" strokeOpacity=".3">jingyan.baidu.com</text>
  </svg>
);

export default function App() {
  return (
    <div className="relative flex h-[1050px] w-[1680px] flex-col overflow-hidden text-[15px] leading-[20px] text-[#1e395b] [font-family:'Open_Sans','Noto_Sans_CJK_SC',sans-serif]">
      <TitleBar />
      <Ribbon />
      <div className="flex h-[794px] bg-linear-to-b from-[#cadbf1] via-[#abc1db] via-50% to-[#829ebf] pt-px">
        <SidePanel />
        <div className="w-[5px] shrink-0 border-r border-[#7f9bc2] bg-[#c5d7ee]" />
        <Editor />
      </div>
      <StatusBar />
      <Taskbar />
      <OutlineMenu />
      {/* floating desktop widget, cut off by the screen edge */}
      <div className="absolute top-[274px] left-[1661px] flex h-[47px] w-[47px] items-center rounded-full border-2 border-white bg-linear-to-b from-[#8be39a] via-[#3fc460] to-[#35bd55] pb-[2px] pl-[3px] text-[12px] font-bold text-white shadow-[0_2px_6px_rgba(40,50,70,0.8)] outline outline-[#8a96a8]">52%</div>
      <Watermark />
    </div>
  );
}
